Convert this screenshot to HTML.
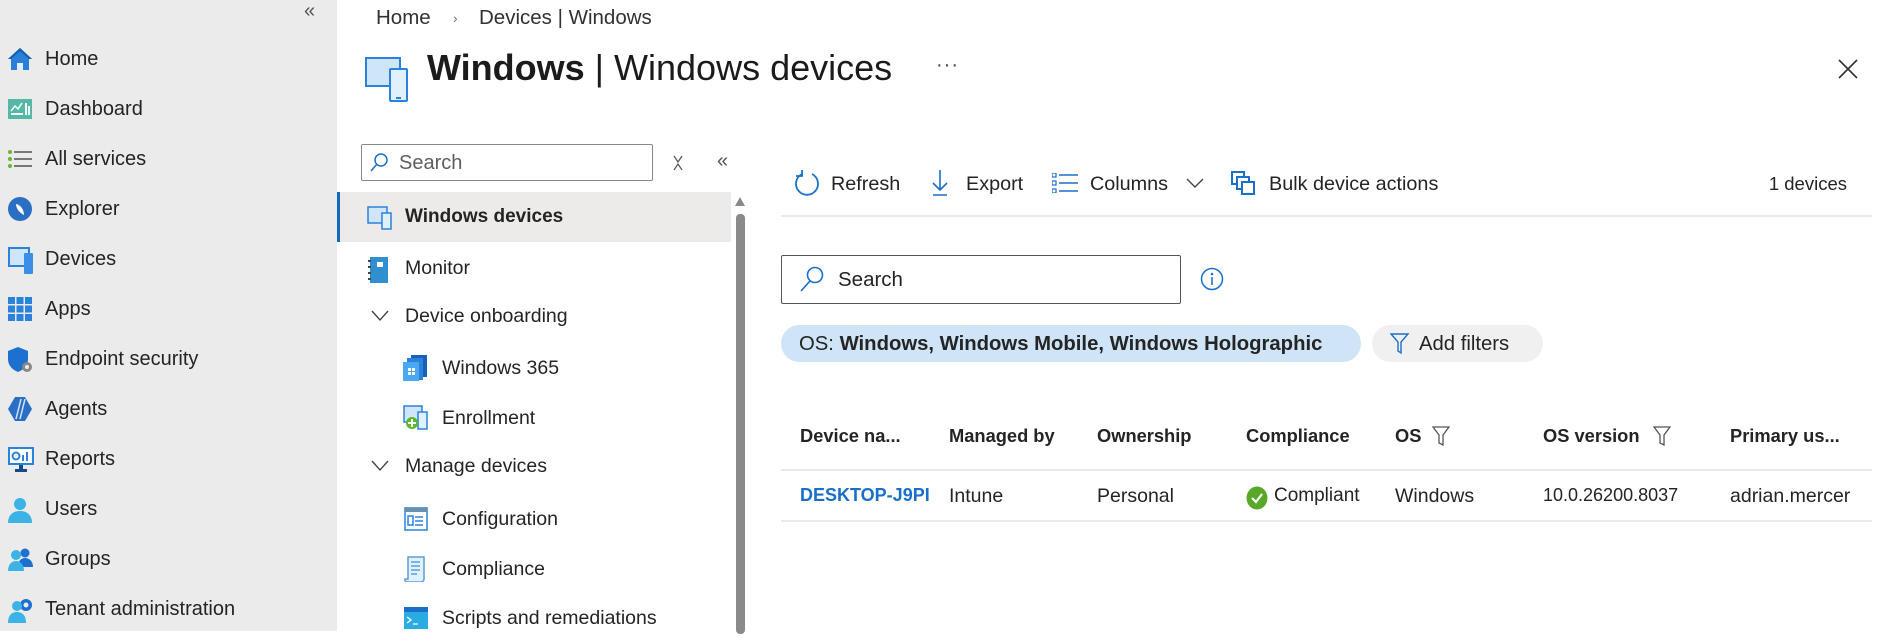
<!DOCTYPE html>
<html><head><meta charset="utf-8"><style>
*{margin:0;padding:0;box-sizing:border-box}
body{width:1878px;height:631px;overflow:hidden;background:#fff;font-family:"Liberation Sans",sans-serif;color:#242424;position:relative}
.a{position:absolute;white-space:nowrap}
#nav{position:absolute;left:0;top:0;width:337px;height:631px;background:#ebebeb}
.ni{position:absolute;left:0;height:50px;width:337px;font-size:20px;line-height:50px}
.ni svg{position:absolute;left:8px;top:13px}
.ni span{position:absolute;left:45px}
.mi{position:absolute;left:337px;width:394px;height:50px;font-size:19.5px;line-height:50px}
.mi svg{position:absolute;top:14px}
.t{font-size:19.8px;line-height:24px}
.th{font-weight:bold;font-size:18.3px}
.td{font-size:19.5px}
</style></head><body>
<div id="nav">
<div class="a" style="left:304px;top:0;font-size:20px;color:#555">«</div>
<div class="ni" style="top:34px"><svg width="24" height="24" viewBox="0 0 24 24"><path d="M12 1L0 12h3v11h6v-7h6v7h6V12h3z" fill="#2a7fd8"/><path d="M12 1L0 12h3L12 4l9 8h3z" fill="#155fae"/><rect x="9" y="16" width="6" height="7" fill="#dfeefb"/></svg><span>Home</span></div>
<div class="ni" style="top:84px"><svg width="24" height="24" viewBox="0 0 24 24"><rect x="0" y="2" width="24" height="20" fill="#54b8a6"/><path d="M3 14l4-5 3 3 4-6" stroke="#fff" stroke-width="1.5" fill="none"/><rect x="3" y="16" width="12" height="2" fill="#fff"/><rect x="17" y="6" width="2" height="12" fill="#fff"/><rect x="20" y="9" width="2" height="9" fill="#fff"/></svg><span>Dashboard</span></div>
<div class="ni" style="top:134px"><svg width="24" height="24" viewBox="0 0 24 24"><circle cx="2" cy="5" r="2" fill="#6bb43a"/><circle cx="2" cy="12" r="2" fill="#6bb43a"/><circle cx="2" cy="19" r="2" fill="#6bb43a"/><rect x="6" y="4" width="18" height="2" fill="#777"/><rect x="6" y="11" width="18" height="2" fill="#777"/><rect x="6" y="18" width="18" height="2" fill="#777"/></svg><span>All services</span></div>
<div class="ni" style="top:184px"><svg width="24" height="24" viewBox="0 0 24 24"><circle cx="12" cy="12" r="12" fill="#2a6fc4"/><path d="M8 7c5 1 8 6 8 11-4-2-8-6-8-11z" fill="#fff"/></svg><span>Explorer</span></div>
<div class="ni" style="top:234px"><svg width="26" height="28" viewBox="0 0 26 28"><rect x="1" y="1" width="20" height="18" fill="#cfe6fa" stroke="#2a82dc" stroke-width="2"/><rect x="16" y="6" width="9" height="21" rx="1" fill="#3a8ee6"/></svg><span>Devices</span></div>
<div class="ni" style="top:284px"><svg width="24" height="24" viewBox="0 0 24 24" fill="#2a82dc"><rect x="0" y="0" width="7" height="7"/><rect x="8.5" y="0" width="7" height="7"/><rect x="17" y="0" width="7" height="7"/><rect x="0" y="8.5" width="7" height="7"/><rect x="8.5" y="8.5" width="7" height="7"/><rect x="17" y="8.5" width="7" height="7"/><rect x="0" y="17" width="7" height="7"/><rect x="8.5" y="17" width="7" height="7"/><rect x="17" y="17" width="7" height="7"/></svg><span>Apps</span></div>
<div class="ni" style="top:334px"><svg width="26" height="28" viewBox="0 0 26 28"><path d="M10 0L0 4v8c0 7 5 11 10 13 5-2 10-6 10-13V4z" fill="#1d6fd0"/><circle cx="19" cy="20" r="5" fill="#888"/><circle cx="19" cy="20" r="2" fill="#ebebeb"/></svg><span>Endpoint security</span></div>
<div class="ni" style="top:384px"><svg width="24" height="24" viewBox="0 0 24 24"><path d="M7 0h10l7 12-7 12H7L0 12z" fill="#2a6fc4"/><path d="M13 2L8 22M17 2l-5 20" stroke="#cfe6fa" stroke-width="1.5"/></svg><span>Agents</span></div>
<div class="ni" style="top:434px"><svg width="26" height="26" viewBox="0 0 26 26"><rect x="0" y="0" width="26" height="18" fill="#2a82dc"/><rect x="2" y="2" width="22" height="14" fill="#fff"/><circle cx="8" cy="9" r="3.5" fill="none" stroke="#2a82dc" stroke-width="2"/><rect x="14" y="8" width="2" height="6" fill="#2a82dc"/><rect x="18" y="5" width="2" height="9" fill="#2a82dc"/><rect x="11" y="18" width="4" height="5" fill="#15498c"/><rect x="7" y="22" width="12" height="3" fill="#15498c"/></svg><span>Reports</span></div>
<div class="ni" style="top:484px"><svg width="24" height="26" viewBox="0 0 24 26"><circle cx="12" cy="7" r="6" fill="#3bb3e6"/><path d="M0 26c0-8 5-12 12-12s12 4 12 12z" fill="#3bb3e6"/></svg><span>Users</span></div>
<div class="ni" style="top:534px"><svg width="26" height="24" viewBox="0 0 26 24"><circle cx="17" cy="6" r="4.5" fill="#1d6fd0"/><path d="M10 20c0-6 3-9 7-9s8 3 8 9z" fill="#1d6fd0"/><circle cx="8" cy="8" r="5" fill="#3bb3e6"/><path d="M0 24c0-7 4-10 8-10s8 3 8 10z" fill="#3bb3e6"/></svg><span>Groups</span></div>
<div class="ni" style="top:584px"><svg width="26" height="26" viewBox="0 0 26 26"><circle cx="18" cy="8" r="6" fill="#1d6fd0"/><circle cx="18" cy="8" r="2.5" fill="#ebebeb"/><circle cx="9" cy="9" r="5" fill="#3bb3e6"/><path d="M0 26c0-8 4-11 9-11s9 3 9 11z" fill="#3bb3e6"/></svg><span>Tenant administration</span></div>
</div>

<div class="a" style="left:376px;top:6px;font-size:20.5px;line-height:24px;color:#323130">Home</div>
<div class="a" style="left:453px;top:6px;font-size:14px;line-height:24px;color:#777">›</div>
<div class="a" style="left:479px;top:6px;font-size:20.5px;line-height:24px;color:#323130">Devices | Windows</div>

<svg class="a" style="left:365px;top:56px" width="46" height="46" viewBox="0 0 46 46"><rect x="1" y="2" width="34" height="28" fill="#cfe6fa" stroke="#2a82dc" stroke-width="2"/><rect x="25" y="13" width="17" height="32" rx="1" fill="#e1f0fd" stroke="#2a82dc" stroke-width="2"/><rect x="31" y="41" width="5" height="2" fill="#2a82dc"/></svg>
<div class="a" style="left:427px;top:46px;font-size:36px;line-height:44px;color:#1b1b1b"><b>Windows</b> | Windows devices</div>
<div class="a" style="left:936px;top:54px;font-size:20px;color:#444;letter-spacing:1px">···</div>
<svg class="a" style="left:1838px;top:59px" width="20" height="20" viewBox="0 0 20 20"><path d="M1 1l18 18M19 1L1 19" stroke="#333" stroke-width="1.6"/></svg>

<div class="a" style="left:361px;top:144px;width:292px;height:37px;border:1px solid #8a8886;border-radius:2px"></div>
<svg class="a" style="left:369px;top:152px" width="20" height="20" viewBox="0 0 20 20"><circle cx="12" cy="8" r="6" fill="none" stroke="#1a6fc8" stroke-width="1.5"/><path d="M8 12L2 19" stroke="#1a6fc8" stroke-width="1.5"/></svg>
<div class="a" style="left:399px;top:151px;color:#605e5c;font-size:20px;line-height:24px">Search</div>
<svg class="a" style="left:672px;top:155px" width="12" height="16" viewBox="0 0 12 16"><path d="M2 1l4 6 4-6M2 15l4-6 4 6" stroke="#555" stroke-width="1.2" fill="none"/></svg>
<div class="a" style="left:717px;top:150px;font-size:20px;color:#555">«</div>

<div class="a" style="left:337px;top:192px;width:394px;height:50px;background:#edebe9"></div>
<div class="a" style="left:337px;top:192px;width:3px;height:50px;background:#0f6cbd"></div>
<div class="a" style="left:734px;top:195px;width:12px;height:436px;background:#fff"></div>
<svg class="a" style="left:735px;top:197px" width="10" height="9" viewBox="0 0 10 9"><path d="M5 0L10 9H0z" fill="#8a8a8a"/></svg>
<div class="a" style="left:736px;top:214px;width:9px;height:420px;background:#8a8a8a;border-radius:4px"></div>

<div class="mi" style="top:192px"><svg style="left:30px" width="26" height="24" viewBox="0 0 26 24"><rect x="1" y="1" width="19" height="16" fill="#cfe6fa" stroke="#2a82dc" stroke-width="1.5"/><rect x="15" y="7" width="9" height="16" fill="#e1f0fd" stroke="#2a82dc" stroke-width="1.5"/></svg><span class="a" style="left:68px;font-weight:bold;font-size:19px">Windows devices</span></div>
<div class="mi" style="top:243px"><svg style="left:31px" width="20" height="26" viewBox="0 0 20 26"><rect x="2" y="0" width="18" height="26" fill="#2f8fcf"/><rect x="0" y="3" width="3" height="2" fill="#444"/><rect x="0" y="9" width="3" height="2" fill="#444"/><rect x="0" y="15" width="3" height="2" fill="#444"/><rect x="0" y="21" width="3" height="2" fill="#444"/><rect x="9" y="5" width="6" height="5" fill="#fff"/></svg><span class="a" style="left:68px">Monitor</span></div>
<div class="mi" style="top:291px"><svg style="left:34px;top:19px" width="18" height="12" viewBox="0 0 18 12"><path d="M1 1l8 9 8-9" stroke="#444" stroke-width="1.4" fill="none"/></svg><span class="a" style="left:68px">Device onboarding</span></div>
<div class="mi" style="top:343px"><svg style="left:66px;top:12px" width="26" height="26" viewBox="0 0 26 26"><rect x="8" y="0" width="16" height="22" fill="#1a5fb8"/><rect x="4" y="3" width="16" height="22" fill="#2a82dc"/><rect x="0" y="7" width="16" height="19" fill="#4aa8f0"/><rect x="5" y="13" width="3" height="3" fill="#fff"/><rect x="9" y="13" width="3" height="3" fill="#fff"/><rect x="5" y="17" width="3" height="3" fill="#fff"/><rect x="9" y="17" width="3" height="3" fill="#fff"/></svg><span class="a" style="left:105px">Windows 365</span></div>
<div class="mi" style="top:393px"><svg style="left:66px;top:12px" width="26" height="26" viewBox="0 0 26 26"><rect x="1" y="1" width="18" height="16" fill="#cfe6fa" stroke="#2a82dc" stroke-width="1.5"/><rect x="15" y="7" width="9" height="17" fill="#e1f0fd" stroke="#2a82dc" stroke-width="1.5"/><circle cx="9" cy="18" r="6" fill="#5cb82f"/><path d="M9 14v8M5 18h8" stroke="#fff" stroke-width="2"/></svg><span class="a" style="left:105px">Enrollment</span></div>
<div class="mi" style="top:441px"><svg style="left:34px;top:19px" width="18" height="12" viewBox="0 0 18 12"><path d="M1 1l8 9 8-9" stroke="#444" stroke-width="1.4" fill="none"/></svg><span class="a" style="left:68px">Manage devices</span></div>
<div class="mi" style="top:494px"><svg style="left:67px;top:13px" width="24" height="24" viewBox="0 0 24 24"><rect x="1" y="1" width="22" height="22" fill="#fff" stroke="#2a82dc" stroke-width="1.5"/><rect x="1" y="1" width="22" height="4" fill="#6b8fb0"/><rect x="4" y="9" width="5" height="9" fill="none" stroke="#2a82dc" stroke-width="1.5"/><path d="M11 10h8M11 14h8M11 18h8" stroke="#2a82dc" stroke-width="1.5"/></svg><span class="a" style="left:105px">Configuration</span></div>
<div class="mi" style="top:544px"><svg style="left:67px;top:12px" width="22" height="26" viewBox="0 0 22 26"><path d="M4 1h16v22a3 3 0 0 1-3 3H2a3 3 0 0 1-1-3h3z" fill="#e1f0fd" stroke="#5a9fd8" stroke-width="1.5"/><path d="M7 6h9M7 10h9M7 14h9M7 18h6" stroke="#5a9fd8" stroke-width="1.5"/></svg><span class="a" style="left:105px">Compliance</span></div>
<div class="mi" style="top:593px"><svg style="left:67px;top:14px" width="24" height="22" viewBox="0 0 24 22"><rect x="0" y="0" width="24" height="22" fill="#2aace2"/><rect x="0" y="0" width="24" height="5" fill="#1a6fc8"/><path d="M3 10l4 3-4 3M9 17h5" stroke="#fff" stroke-width="1.3" fill="none"/></svg><span class="a" style="left:105px">Scripts and remediations</span></div>

<svg class="a" style="left:794px;top:170px" width="26" height="28" viewBox="0 0 26 28"><path d="M8 4A11 11 0 1 0 18 4" stroke="#1a6fc8" stroke-width="1.8" fill="none"/><path d="M8 0v6H2" stroke="#1a6fc8" stroke-width="1.8" fill="none"/></svg>
<div class="a t" style="left:831px;top:172px">Refresh</div>
<svg class="a" style="left:931px;top:170px" width="18" height="26" viewBox="0 0 18 26"><path d="M9 0v20M2 13l7 7 7-7M2 25h14" stroke="#1a6fc8" stroke-width="1.6" fill="none"/></svg>
<div class="a t" style="left:966px;top:172px">Export</div>
<svg class="a" style="left:1052px;top:173px" width="26" height="20" viewBox="0 0 26 20"><rect x="0" y="0" width="4" height="4" fill="none" stroke="#1a6fc8" stroke-width="1.2"/><rect x="0" y="8" width="4" height="4" fill="none" stroke="#1a6fc8" stroke-width="1.2"/><rect x="0" y="16" width="4" height="4" fill="none" stroke="#1a6fc8" stroke-width="1.2"/><path d="M7 2h19M7 10h19M7 18h19" stroke="#1a6fc8" stroke-width="1.6"/></svg>
<div class="a t" style="left:1090px;top:172px">Columns</div>
<svg class="a" style="left:1186px;top:178px" width="18" height="11" viewBox="0 0 18 11"><path d="M1 1l8 8 8-8" stroke="#444" stroke-width="1.4" fill="none"/></svg>
<svg class="a" style="left:1231px;top:171px" width="24" height="24" viewBox="0 0 24 24"><rect x="1" y="1" width="12" height="12" fill="#fff" stroke="#1a6fc8" stroke-width="2"/><rect x="6" y="6" width="12" height="12" fill="#fff" stroke="#1a6fc8" stroke-width="2"/><rect x="11" y="11" width="12" height="12" fill="#fff" stroke="#1a6fc8" stroke-width="2"/></svg>
<div class="a t" style="left:1269px;top:172px">Bulk device actions</div>
<div class="a" style="left:1747px;top:172px;width:100px;text-align:right;font-size:18.5px;line-height:24px">1 devices</div>
<div class="a" style="left:781px;top:215px;width:1091px;height:2px;background:#eaeaea"></div>

<div class="a" style="left:781px;top:255px;width:400px;height:49px;border:1px solid #555;border-radius:2px"></div>
<svg class="a" style="left:800px;top:266px" width="24" height="26" viewBox="0 0 24 26"><circle cx="15" cy="9" r="7.5" fill="none" stroke="#1a6fc8" stroke-width="1.6"/><path d="M10 15L1 25" stroke="#1a6fc8" stroke-width="1.6"/></svg>
<div class="a" style="left:838px;top:268px;font-size:20.5px;line-height:24px">Search</div>
<svg class="a" style="left:1200px;top:267px" width="24" height="24" viewBox="0 0 24 24"><circle cx="12" cy="12" r="10.5" fill="none" stroke="#1a6fc8" stroke-width="1.5"/><circle cx="12" cy="7" r="1.3" fill="#1a6fc8"/><path d="M12 10v8" stroke="#1a6fc8" stroke-width="1.5"/></svg>

<div class="a" style="left:781px;top:325px;width:580px;height:37px;border-radius:19px;background:#cfe4f6"></div>
<div class="a" style="left:799px;top:332px;font-size:20.3px;line-height:24px">OS: <b>Windows, Windows Mobile, Windows Holographic</b></div>
<div class="a" style="left:1372px;top:325px;width:171px;height:37px;border-radius:19px;background:#f0f0f0"></div>
<svg class="a" style="left:1390px;top:333px" width="20" height="22" viewBox="0 0 20 22"><path d="M1 1h17l-7 8v11l-3-2V9z" stroke="#1a6fc8" stroke-width="1.4" fill="none"/></svg>
<div class="a" style="left:1419px;top:332px;font-size:20.3px;line-height:24px">Add filters</div>

<div class="a th" style="left:800px;top:425px">Device na...</div>
<div class="a th" style="left:949px;top:425px">Managed by</div>
<div class="a th" style="left:1097px;top:425px">Ownership</div>
<div class="a th" style="left:1246px;top:425px">Compliance</div>
<div class="a th" style="left:1395px;top:425px">OS</div>
<svg class="a" style="left:1432px;top:426px" width="18" height="20" viewBox="0 0 18 20"><path d="M1 1h16l-6 8v10l-4-2V9z" stroke="#555" stroke-width="1.3" fill="none"/></svg>
<div class="a th" style="left:1543px;top:425px">OS version</div>
<svg class="a" style="left:1653px;top:426px" width="18" height="20" viewBox="0 0 18 20"><path d="M1 1h16l-6 8v10l-4-2V9z" stroke="#555" stroke-width="1.3" fill="none"/></svg>
<div class="a th" style="left:1730px;top:425px">Primary us...</div>
<div class="a" style="left:781px;top:469px;width:1091px;height:2px;background:#eaeaea"></div>

<div class="a td" style="left:800px;top:485px;color:#1a6fc8;font-weight:bold;font-size:18px;width:131px;overflow:hidden">DESKTOP-J9PI</div>
<div class="a td" style="left:949px;top:485px">Intune</div>
<div class="a td" style="left:1097px;top:485px">Personal</div>
<svg class="a" style="left:1246px;top:486px" width="22" height="24" viewBox="0 0 22 24"><ellipse cx="11" cy="12" rx="10.5" ry="11.5" fill="#5aa82a"/><path d="M6 12l4 4 6-8" stroke="#fff" stroke-width="2.2" fill="none"/></svg>
<div class="a td" style="left:1274px;top:485px;font-size:19px">Compliant</div>
<div class="a td" style="left:1395px;top:485px">Windows</div>
<div class="a td" style="left:1543px;top:485px;font-size:18px">10.0.26200.8037</div>
<div class="a td" style="left:1730px;top:485px;width:142px;overflow:hidden">adrian.mercer</div>
<div class="a" style="left:781px;top:520px;width:1091px;height:2px;background:#eaeaea"></div>
</body></html>
